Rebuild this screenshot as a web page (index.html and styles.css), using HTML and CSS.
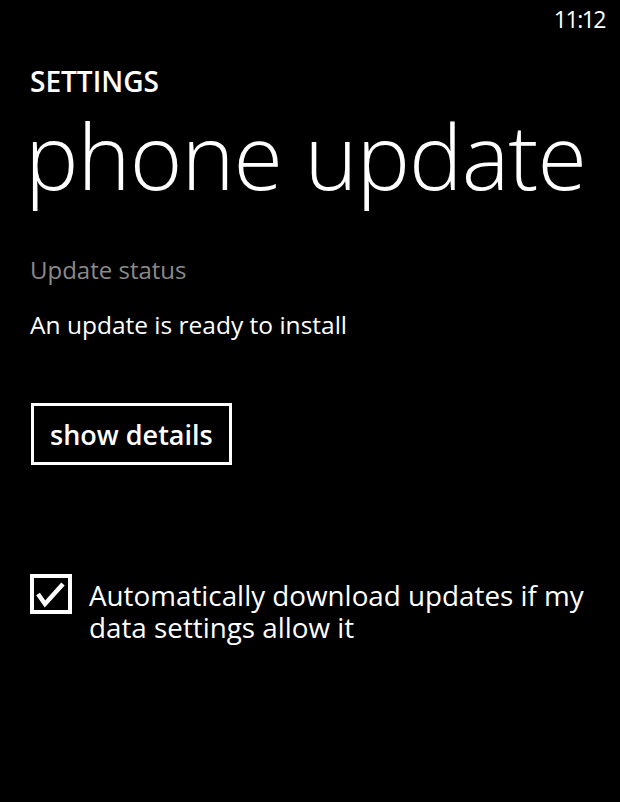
FILE: index.html
```html
<!DOCTYPE html>
<html lang="en">
<head>
<meta charset="utf-8">
<title>phone update</title>
<link rel="stylesheet" href="styles.css">
</head>
<body>
<div class="screen">
  <div class="status-bar">
    <span class="clock">11:12</span>
  </div>
  <header class="page-header">
    <div class="app-title">SETTINGS</div>
    <h1 class="page-title">phone update</h1>
  </header>
  <section class="content">
    <div class="field-label">Update status</div>
    <div class="field-value">An update is ready to install</div>
    <button class="wp-button" type="button">show details</button>
    <label class="check-row">
      <span class="check-box">
        <svg viewBox="0 0 34 32" width="34" height="32" aria-hidden="true">
          <path d="M4 16 L11 26 L29 6" fill="none" stroke="#fff" stroke-width="4.5" stroke-linecap="butt" stroke-linejoin="miter"/>
        </svg>
      </span>
      <span class="check-label">Automatically download updates if my data settings allow it</span>
    </label>
  </section>
</div>
</body>
</html>
```
FILE: styles.css
```css
html, body {
  margin: 0;
  padding: 0;
  background: #000;
}

.screen {
  width: 620px;
  height: 802px;
  background: #000;
  color: #fff;
  font-family: "Open Sans", "Noto Sans", sans-serif;
  overflow: hidden;
}

.status-bar {
  display: flex;
  justify-content: flex-end;
  padding: 2px 15px 0 0;
  height: 38px;
}

.clock {
  font-size: 23px;
  line-height: 34px;
  letter-spacing: -1.5px;
}

.page-header {
  padding: 26px 0 0 30px;
}

.app-title {
  font-size: 28px;
  font-weight: 600;
  line-height: 30px;
}

.page-title {
  margin: 1px 0 0 -5px;
  font-size: 90px;
  font-weight: 300;
  line-height: 116px;
  letter-spacing: -1px;
}

.content {
  padding: 41px 0 0 30px;
}

.field-label {
  font-size: 24px;
  line-height: 32px;
  color: #8a8a8a;
}

.field-value {
  margin-top: 23px;
  font-size: 24.5px;
  line-height: 32px;
}

.wp-button {
  display: block;
  box-sizing: border-box;
  margin: 62px 0 0 1px;
  padding: 0 16px;
  height: 62px;
  background: #000;
  color: #fff;
  border: 3px solid #fff;
  font-family: inherit;
  font-size: 27px;
  font-weight: 600;
  line-height: 1;
}

.check-row {
  display: flex;
  align-items: flex-start;
  margin-top: 109px;
}

.check-box {
  flex: none;
  box-sizing: border-box;
  width: 42px;
  height: 40px;
  border: 4px solid #fff;
  display: flex;
  align-items: center;
  justify-content: center;
}

.check-label {
  margin: 5px 0 0 17px;
  font-size: 27.8px;
  line-height: 32px;
  max-width: 510px;
}
```
